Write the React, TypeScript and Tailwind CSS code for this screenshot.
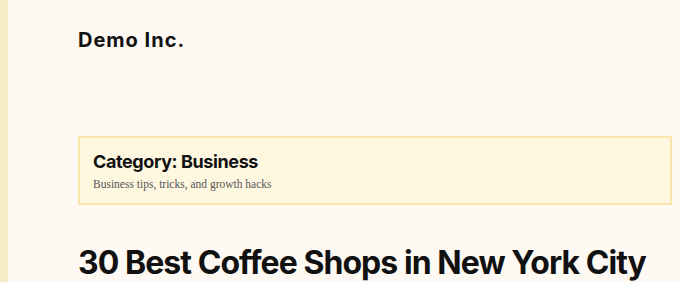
export default function App() {
  return (
    <div className="flex h-[282px] w-[680px] overflow-hidden bg-[#fef9f2]">
      <div className="w-2 shrink-0 bg-[#f4ecc6]" />
      <div className="min-w-0 flex-1 pl-[70px] pr-2">
        <div className="pt-[27px] font-['Inter',sans-serif] text-[20px] leading-[26px] font-bold tracking-[1px] text-[#111]">Demo Inc.</div>
        <div className="mt-[83px] border-2 border-[#fae6a8] bg-[#fff8e1] px-[13px] pt-[13px] pb-[11px]">
          <h1 className="font-['Inter',sans-serif] text-[18px] leading-[22px] font-bold tracking-[-0.4px] text-[#111]">Category: Business</h1>
          <p className="mt-[3px] font-['Liberation_Serif',serif] text-[11.5px] leading-[16px] text-[#555]">Business tips, tricks, and growth hacks</p>
        </div>
        <h2 className="mt-[38px] whitespace-nowrap font-['Inter',sans-serif] text-[32px] leading-[40px] font-bold tracking-[-0.95px] text-[#111]">30 Best Coffee Shops in New York City</h2>
      </div>
    </div>
  );
}
